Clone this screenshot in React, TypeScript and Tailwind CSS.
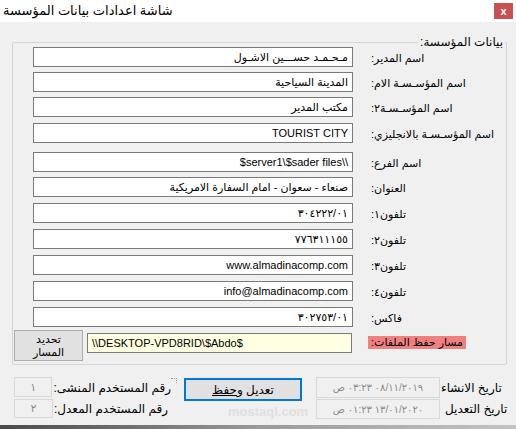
const FONT = "font-['Liberation_Sans','DejaVu_Sans',sans-serif]"

type Row = { label: string; value: string; ltr?: boolean; gap: string }

const ROWS: Row[] = [
  { label: 'اسم المدير:', value: 'مـحـمـد حســـين الاشـول', gap: 'mt-[4px]' },
  { label: 'اسم المؤسـسـة الام:', value: 'المدينة السياحية', gap: 'mt-[5px]' },
  { label: 'اسم المؤسـسـة٢:', value: 'مكتب المدير', gap: 'mt-[5px]' },
  { label: 'اسم المؤسـسـة بالانجليزي:', value: 'TOURIST CITY', ltr: true, gap: 'mt-[6px]' },
  { label: 'اسم الفرع:', value: '$server1\\$sader files\\\\', ltr: true, gap: 'mt-[9px]' },
  { label: 'العنوان:', value: 'صنعاء - سعوان - امام السفارة الامريكية', gap: 'mt-[5px]' },
  { label: 'تلفون١:', value: '٣٠٤٢٢٢/٠١', ltr: true, gap: 'mt-[6px]' },
  { label: 'تلفون٢:', value: '٧٧٦٣١١١٥٥', ltr: true, gap: 'mt-[6px]' },
  { label: 'تلفون٣:', value: 'www.almadinacomp.com', ltr: true, gap: 'mt-[6px]' },
  { label: 'تلفون٤:', value: 'info@almadinacomp.com', ltr: true, gap: 'mt-[6px]' },
  { label: 'فاكس:', value: '٣٠٢٧٥٣/٠١', ltr: true, gap: 'mt-[6px]' },
]

export default function App() {
  return (
    <div className={`relative h-[429px] w-[516px] overflow-hidden bg-[#f0f0f0] text-[11px] text-black ${FONT}`}>
      {/* title bar */}
      <div className="flex h-[22px] items-start justify-between bg-white">
        <span dir="rtl" className="ml-[3px] mt-[3px] text-[13px] leading-[16px]">شاشة اعدادات بيانات المؤسسة</span>
        <div className="mr-[3px] mt-[3px] flex h-[16px] w-[19px] items-center justify-center bg-[#c75050] text-[11px] font-bold leading-none text-white">
          x
        </div>
      </div>

      {/* group box */}
      <div className="relative ml-[12px] mt-[20px] h-[323px] w-[495px] rounded-[2px] border border-[#d5d5d5]">
        <span dir="rtl" className="absolute -top-[8px] right-[1px] bg-[#f0f0f0] px-[2px] text-[12px] leading-[14px]">
          بيانات المؤسسة:
        </span>

        <div className="flex flex-col">
          {ROWS.map((r) => (
            <div key={r.label} className={`flex h-[20px] items-center ${r.gap}`}>
              <div className="ml-[20px] flex h-[20px] w-[320px] items-center justify-end border border-[#7a7a7a] bg-white px-[4px]">
                <span dir={r.ltr ? 'ltr' : 'rtl'} className="whitespace-nowrap leading-[14px]">{r.value}</span>
              </div>
              <span dir="rtl" className="ml-[18px] mt-[1px] whitespace-nowrap leading-[14px]">{r.label}</span>
            </div>
          ))}

          <div className="mt-[6px] flex items-start">
            <button className="ml-[1px] -mt-[3px] flex h-[31px] w-[69px] flex-col items-center justify-center border border-[#adadad] bg-[#e1e1e1] leading-[13px]">
              <span>تحديد</span>
              <span>المسار</span>
            </button>
            <div className="ml-[4px] flex h-[20px] w-[265px] items-center border border-[#7a7a7a] bg-[#ffffe1] px-[4px]">
              <span dir="ltr" className="whitespace-nowrap leading-[14px]">\\DESKTOP-VPD8RID\$Abdo$</span>
            </div>
            <span dir="rtl" className="ml-[16px] mt-[3px] flex h-[13px] w-[98px] items-center justify-center whitespace-nowrap bg-[#f08080] leading-[13px]">
              مسار حفظ الملفات:
            </span>
          </div>
        </div>
      </div>

      {/* bottom area */}
      <div className="flex pt-[12px]">
        <div className="ml-[14px] flex w-[157px] flex-col gap-[2px]">
          <div className="flex items-center">
            <div className="flex h-[20px] w-[39px] items-center justify-center border border-[#d9d9d9] text-[#8c8c8c]">١</div>
            <span dir="rtl" className="ml-[1px] mt-[1px] whitespace-nowrap text-[12px] leading-[14px]">رقم المستخدم المنشى:</span>
          </div>
          <div className="flex items-center">
            <div className="flex h-[19px] w-[39px] items-center justify-center border border-[#d9d9d9] text-[#8c8c8c]">٢</div>
            <span dir="rtl" className="ml-[1px] mt-[1px] whitespace-nowrap text-[12px] leading-[14px]">رقم المستخدم المعدل:</span>
          </div>
        </div>

        <div className="mt-[1px] h-[5px] w-[6px] border-r border-t border-dotted border-[#9a9a9a]" />

        <button className="ml-[7px] mt-[1px] flex h-[23px] w-[118px] items-center justify-center border-2 border-[#0078d7] bg-[#e1e1e1] text-[12px]">
          <span dir="rtl">تعديل و<span className="underline">حفظ</span></span>
        </button>

        <div className="ml-[14px] flex flex-col gap-[1px]">
          <div className="flex items-center">
            <div className="flex h-[21px] w-[124px] items-center justify-center overflow-hidden border border-[#d9d9d9] text-[#8c8c8c]">
              <span dir="rtl" className="whitespace-nowrap text-[10px] tracking-[-1px]">٠٨/١١/٢٠١٩ ٠٣:٢٣ ص</span>
            </div>
            <span dir="rtl" className="ml-[1px] whitespace-nowrap text-[12px] leading-[14px]">تاريخ الانشاء</span>
          </div>
          <div className="flex items-center">
            <div className="flex h-[20px] w-[124px] items-center justify-center overflow-hidden border border-[#d9d9d9] text-[#8c8c8c]">
              <span dir="rtl" className="whitespace-nowrap text-[10px] tracking-[-1px]">١٣/٠١/٢٠٢٠ ٠١:٢٣ ص</span>
            </div>
            <span dir="rtl" className="ml-[5px] whitespace-nowrap text-[12px] leading-[14px]">تاريخ التعديل</span>
          </div>
        </div>
      </div>

      {/* watermark */}
      <div className="pointer-events-none absolute left-[228px] top-[405px] text-[13px] font-bold leading-none text-[#e0e0e0]">
        mostaql.com
      </div>

      {/* desktop strip below the window */}
      <div className="absolute bottom-0 left-0 h-[4px] w-full bg-gradient-to-r from-[#4a4a4a] via-[#9a9a9a] to-[#c4c4c4]" />
    </div>
  )
}
